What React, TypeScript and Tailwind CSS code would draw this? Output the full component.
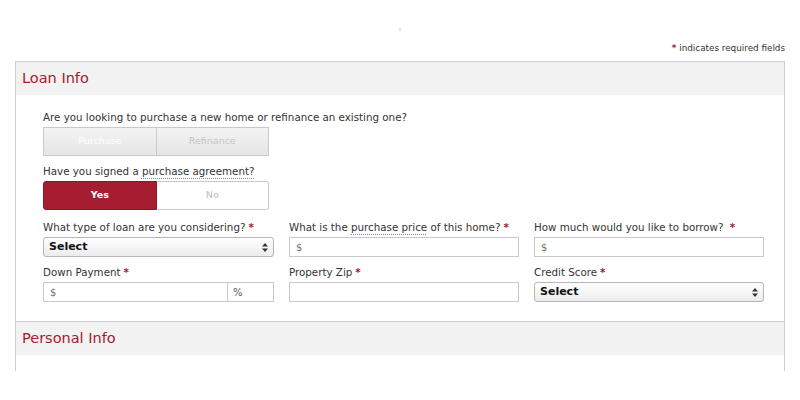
import React from "react";

const red = "text-[#a6192e]";

function Req() {
  return <span className={`${red} ml-[3px] font-bold`}>*</span>;
}

function Dotted({ children }: { children: React.ReactNode }) {
  return (
    <span className="underline decoration-dotted decoration-[#888] underline-offset-[3px]">
      {children}
    </span>
  );
}

function Arrows() {
  return (
    <svg width="6" height="9" viewBox="0 0 6 9" className="shrink-0">
      <path d="M3 0 L6 3.5 H0 Z" fill="#333" />
      <path d="M3 9 L6 5.5 H0 Z" fill="#333" />
    </svg>
  );
}

function SelectBox() {
  return (
    <div className="h-[20px] rounded-[3px] border border-[#b5b5b5] bg-linear-to-b from-[#ffffff] to-[#ececec] flex items-center justify-between pl-[5px] pr-[5px]">
      <span className="text-[11px] font-bold text-[#111]">Select</span>
      <Arrows />
    </div>
  );
}

function TextBox({ prefix }: { prefix?: string }) {
  return (
    <div className="h-[20px] border border-[#c8c8c8] bg-white flex items-center pl-[6px] text-[10px] text-[#777]">
      {prefix}
    </div>
  );
}

function Field({ label, children }: { label: React.ReactNode; children: React.ReactNode }) {
  return (
    <div className="flex flex-col">
      <div className="h-[14px] leading-[14px] text-[10.3px] text-[#333] whitespace-nowrap">{label}</div>
      <div className="mt-[3px]">{children}</div>
    </div>
  );
}

export default function App() {
  return (
    <div
      className="w-[800px] h-[400px] bg-white overflow-hidden"
      style={{ fontFamily: '"DejaVu Sans", Verdana, sans-serif' }}
    >
      <div className="flex justify-center pt-[28px]">
        <div className="w-[2px] h-[3px] bg-[#e2e2e2]" />
      </div>
      <div className="pr-[15px] mt-[10px] h-[14px] leading-[14px] text-right text-[8.8px] text-[#333]">
        <span className={`${red} font-bold mr-[3px]`}>*</span>indicates required fields
      </div>

      <div className="mx-[15px] mt-[6px] border border-b-0 border-[#cfcfcf]">
        <div className="h-[33px] bg-[#f2f2f2] flex items-center pl-[6px]">
          <span className={`${red} text-[14.5px]`}>Loan Info</span>
        </div>

        <div className="pl-[27px] pr-[20px] pt-[15px] pb-[19px]">
          <div className="h-[14px] leading-[14px] text-[10.3px] text-[#333]">
            Are you looking to purchase a new home or refinance an existing one?
          </div>
          <div className="mt-[3px] flex w-[226px] h-[29px]">
            <div className="flex-1 border border-[#c9c9c9] bg-linear-to-b from-[#f3f3f3] to-[#e6e6e6] flex items-center justify-center text-[9.5px] text-white">
              Purchase
            </div>
            <div className="flex-1 border border-l-0 border-[#c9c9c9] bg-linear-to-b from-[#f3f3f3] to-[#e6e6e6] flex items-center justify-center text-[9.5px] text-[#c4c4c4]">
              Refinance
            </div>
          </div>

          <div className="mt-[8px] h-[14px] leading-[14px] text-[10.3px] text-[#333]">
            Have you signed a <Dotted>purchase agreement?</Dotted>
          </div>
          <div className="mt-[3px] flex w-[226px] h-[29px]">
            <div className="flex-1 rounded-l-[3px] bg-[#a61c31] border border-[#8f1527] flex items-center justify-center text-[9.5px] font-bold text-white">
              Yes
            </div>
            <div className="flex-1 rounded-r-[3px] border border-l-0 border-[#c9c9c9] bg-white flex items-center justify-center text-[9.5px] text-[#bdbdbd]">
              No
            </div>
          </div>

          <div className="mt-[10px] grid grid-cols-[231px_230px_230px] gap-x-[15px] gap-y-[8px]">
            <Field label={<>What type of loan are you considering?<Req /></>}>
              <SelectBox />
            </Field>
            <Field label={<>What is the <Dotted>purchase price</Dotted> of this home?<Req /></>}>
              <TextBox prefix="$" />
            </Field>
            <Field label={<>How much would you like to borrow? <Req /></>}>
              <TextBox prefix="$" />
            </Field>

            <Field label={<>Down Payment<Req /></>}>
              <div className="flex">
                <div className="flex-1">
                  <TextBox prefix="$" />
                </div>
                <div className="w-[46px] h-[20px] border border-l-0 border-[#c8c8c8] flex items-center pl-[5px] text-[10px] text-[#555]">
                  %
                </div>
              </div>
            </Field>
            <Field label={<>Property Zip<Req /></>}>
              <TextBox />
            </Field>
            <Field label={<>Credit Score<Req /></>}>
              <SelectBox />
            </Field>
          </div>
        </div>

        <div className="h-[34px] border-t border-[#cfcfcf] bg-[#f2f2f2] flex items-center pl-[6px]">
          <span className={`${red} text-[14.5px]`}>Personal Info</span>
        </div>
        <div className="h-[16px] bg-white" />
      </div>
    </div>
  );
}
